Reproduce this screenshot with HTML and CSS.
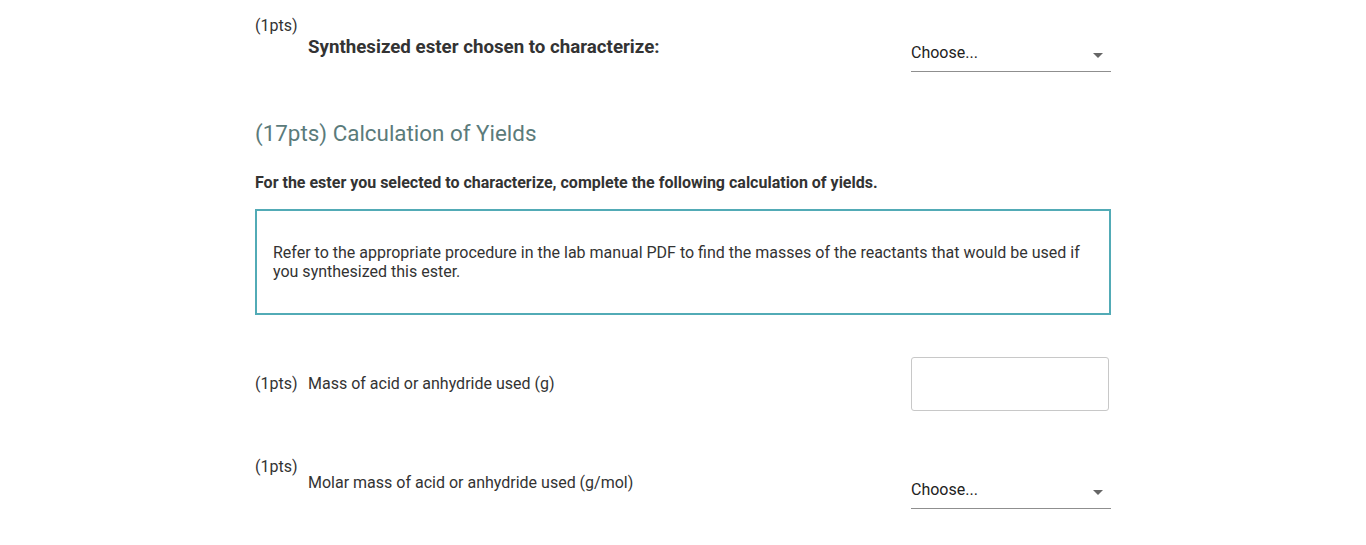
FILE: index.html
```html
<!DOCTYPE html>
<html lang="en">
<head>
    <meta charset="UTF-8">
    <title>Calculation of Yields</title>
    <link rel="stylesheet" href="styles.css">
</head>
<body>
    <div class="page">
        <div class="question">
            <div class="pts">(1pts)</div>
            <div class="q-row q-row-bold">
                <div class="q-label q-label-bold">Synthesized ester chosen to characterize:</div>
                <div class="select">
                    <span>Choose...</span>
                    <span class="caret"></span>
                </div>
            </div>
        </div>

        <h2 class="section-title">(17pts) Calculation of Yields</h2>
        <p class="instruction">For the ester you selected to characterize, complete the following calculation of yields.</p>

        <div class="note">
            Refer to the appropriate procedure in the lab manual PDF to find the masses of the reactants that would be used if you synthesized this ester.
        </div>

        <div class="question question-inline">
            <div class="q-row q-row-center">
                <div class="q-text"><span class="pts-inline">(1pts)</span>Mass of acid or anhydride used (g)</div>
                <input type="text" class="text-input">
            </div>
        </div>

        <div class="question question-last">
            <div class="pts">(1pts)</div>
            <div class="q-row">
                <div class="q-label">Molar mass of acid or anhydride used (g/mol)</div>
                <div class="select">
                    <span>Choose...</span>
                    <span class="caret"></span>
                </div>
            </div>
        </div>
    </div>
</body>
</html>
```

FILE: styles.css
```css
body {
    margin: 0;
    font-family: Roboto, "Liberation Sans", Arial, sans-serif;
    color: #333;
    background-color: #fff;
}
.page {
    width: 856px;
    margin: 0 auto;
    padding-top: 18px;
}
.pts {
    font-size: 16px;
    line-height: 16px;
}
.q-row {
    display: flex;
    justify-content: space-between;
    align-items: flex-start;
}
.q-row-center {
    align-items: center;
}
.q-label {
    margin-left: 53px;
    font-size: 16px;
    line-height: 16px;
}
.q-label-bold {
    margin-top: 2px;
    font-size: 18.72px;
    font-weight: bold;
    line-height: 22px;
}
.select {
    width: 200px;
    margin-top: 5px;
    padding-bottom: 8px;
    border-bottom: 1px solid #8f8f8f;
    display: flex;
    justify-content: space-between;
    align-items: center;
    font-size: 16px;
    line-height: 20px;
    color: #222;
}
.q-row-bold .select {
    margin-top: 9px;
}
.caret {
    width: 0;
    height: 0;
    margin: 4px 8px 0 0;
    border-left: 5px solid transparent;
    border-right: 5px solid transparent;
    border-top: 5px solid #666;
}
.section-title {
    margin: 47px 0 0;
    font-size: 22.4px;
    font-weight: normal;
    line-height: 28px;
    color: #5b7b7b;
}
.instruction {
    margin: 26px 0 0;
    font-size: 16px;
    font-weight: bold;
    line-height: 20px;
}
.note {
    margin-top: 16px;
    padding: 32px 16px;
    border: 2px solid #52abb6;
    font-size: 16px;
    line-height: 19px;
}
.question-inline {
    margin-top: 42px;
}
.q-text {
    font-size: 16px;
    line-height: 20px;
}
.pts-inline {
    display: inline-block;
    width: 53px;
}
.text-input {
    box-sizing: border-box;
    width: 198px;
    height: 54px;
    margin-right: 2px;
    border: 1px solid #c8c8c8;
    border-radius: 3px;
}
.question-last {
    margin-top: 48px;
}
```
